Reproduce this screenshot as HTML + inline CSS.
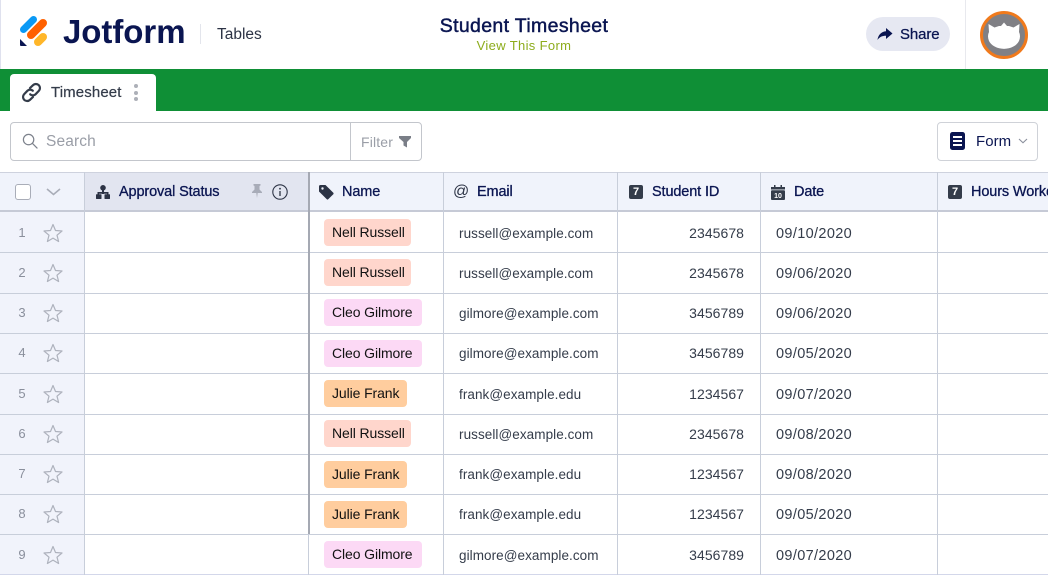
<!DOCTYPE html>
<html><head><meta charset="utf-8"><style>
html,body{margin:0;padding:0;background:#fff}
body{width:1048px;height:575px;overflow:hidden;position:relative;font-family:"Liberation Sans",sans-serif;color:#0a1551}
.a{position:absolute;white-space:nowrap}
.l{position:absolute;background:#c8ceda}
.hd{position:absolute;top:174px;height:37px;line-height:37px;font-size:14.5px;font-weight:400;-webkit-text-stroke:.3px #0a1551;letter-spacing:-.13px;white-space:nowrap}
.t{position:absolute;font-size:13.5px;color:#343c4a;white-space:nowrap;line-height:20px}
.e{margin-top:1px;letter-spacing:.07px}
.i{font-size:14px;letter-spacing:.05px}
.d{font-size:14.5px;letter-spacing:.35px;margin-top:1px}
.b{position:absolute;left:324px;height:27px;line-height:27px;border-radius:4px;font-size:14px;color:#111;padding-left:8px;box-sizing:border-box;white-space:nowrap;letter-spacing:-.1px}
.n{background:#ffd6cc;width:87px}.c{background:#fcd9f5;width:98px}.j{background:#ffcd9e;width:83px}
.num{position:absolute;left:0;width:44px;text-align:center;font-size:13px;color:#8a8f9c;line-height:20px}
.s{position:absolute;left:43px;width:20px;height:20px}
</style></head><body>

<div class="a" style="left:0;top:0;width:1048px;height:69px;background:#fff"></div>
<div class="a" style="left:0;top:0;width:1px;height:69px;background:#dfe1ee"></div>
<svg class="a" style="left:18px;top:15px" width="32" height="33" viewBox="0 0 32 33" fill="none" stroke-linecap="round">
<path d="M5.500 14.500 L15.500 4.500" stroke="#0a99f5" stroke-width="7"/>
<path d="M13 20 L25 8" stroke="#ff6100" stroke-width="8"/>
<path d="M20 27 L25 22" stroke="#ffb629" stroke-width="8"/>
<path d="M2 24 L9 31 H3 Q2 31 2 30Z" fill="#0a1551"/>
</svg>
<div class="a" style="left:63px;top:11px;font-size:33px;line-height:42px;font-weight:700;letter-spacing:-.05px;color:#0a1551">Jotform</div>
<div class="a" style="left:200px;top:24px;width:1px;height:20px;background:#e3e5ec"></div>
<div class="a" style="left:217px;top:25px;font-size:15.5px;line-height:20px;color:#2c3345">Tables</div>
<div class="a" style="left:0;width:1048px;top:14px;text-align:center;font-size:19.500px;line-height:24px;color:#0a1551;-webkit-text-stroke:.45px #0a1551;letter-spacing:.35px">Student Timesheet</div>
<div class="a" style="left:0;width:1048px;top:37px;text-align:center;font-size:13px;line-height:17px;color:#8dac1c;letter-spacing:.35px">View This Form</div>
<div class="a" style="left:866px;top:17px;width:84px;height:34px;border-radius:17px;background:#e6e8f2"></div>
<svg class="a" style="left:877px;top:28px" width="16" height="13" viewBox="0 0 16 13"><path d="M9 0 L15.500 5.500 L9 11 V7.800 C5.500 7.800 2.500 8.800 .5 12 C1 7.500 4 3.600 9 3.300Z" fill="#0a1551"/></svg>
<div class="a" style="left:900px;top:25px;font-size:15px;line-height:19px;color:#0a1551;-webkit-text-stroke:.25px #0a1551;letter-spacing:-.1px">Share</div>
<div class="a" style="left:965px;top:0;width:1px;height:69px;background:#e8e9ee"></div>
<div class="a" style="left:980px;top:11px;width:48px;height:48px;box-sizing:border-box;border-radius:50%;background:#808085;border:3px solid #f07a1c"></div>
<svg class="a" style="left:986px;top:20px" width="37" height="34" viewBox="0 0 37 34"><path d="M2.500 4 L8.500 7.500 L13 6 L15 6 L18 2.500 L21 6 L23 6 L27.500 7.500 L33.500 4 L33 12 Q35 16 33 21 A16 12 0 0 1 3 21 Q1 16 3 12Z" fill="#fff"/></svg>

<div class="a" style="left:0;top:69px;width:1048px;height:42px;background:#0f8f36"></div>
<div class="a" style="left:10px;top:74px;width:146px;height:37px;background:#fff;border-radius:4px 4px 0 0"></div>
<svg class="a" style="left:21px;top:82px" width="21" height="21" viewBox="0 0 21 21" fill="none" stroke="#343c4a" stroke-width="2.200" stroke-linecap="round"><path d="M9 6 L12 3.200 A3.800 3.800 0 0 1 17.800 8.900 L14.500 12.300 A3.800 3.800 0 0 1 9.200 12.300"/><path d="M12 15 L9 17.800 A3.800 3.800 0 0 1 3.200 12.100 L6.500 8.700 A3.800 3.800 0 0 1 11.800 8.700"/></svg>
<div class="a" style="left:51px;top:84px;font-size:15px;line-height:18px;color:#343c4a;-webkit-text-stroke:.2px #343c4a;letter-spacing:.12px">Timesheet</div>
<div class="a" style="left:134px;top:84px;width:4px;height:4px;border-radius:50%;background:#adb0b8"></div>
<div class="a" style="left:134px;top:91px;width:4px;height:4px;border-radius:50%;background:#adb0b8"></div>
<div class="a" style="left:134px;top:97px;width:4px;height:4px;border-radius:50%;background:#adb0b8"></div>

<div class="a" style="left:10px;top:122px;width:412px;height:39px;box-sizing:border-box;border:1px solid #c3c6cc;border-radius:4px"></div>
<div class="a" style="left:350px;top:122px;width:1px;height:39px;background:#c3c6cc"></div>
<svg class="a" style="left:22px;top:133px" width="16" height="16" viewBox="0 0 17 17" fill="none" stroke="#7d828c" stroke-width="1.300"><circle cx="7" cy="7" r="5.500"/><path d="M11 11 L16 16" stroke-linecap="round"/></svg>
<div class="a" style="left:46px;top:132px;font-size:15.500px;line-height:20px;color:#9a9ea7;letter-spacing:.12px">Search</div>
<div class="a" style="left:361px;top:133px;font-size:14px;line-height:18px;color:#9a9ea7;letter-spacing:.15px">Filter</div>
<svg class="a" style="left:399px;top:136px" width="12" height="12" viewBox="0 0 12 12"><path d="M0 0 H12 V2 L8 6 V11.500 L4.500 9.500 V6 L0 2Z" fill="#7a7e87"/></svg>
<div class="a" style="left:937px;top:122px;width:101px;height:39px;box-sizing:border-box;border:1px solid #cfd2d8;border-radius:4px"></div>
<svg class="a" style="left:950px;top:132px" width="15" height="18" viewBox="0 0 15 18"><rect width="15" height="18" rx="2.500" fill="#0a1551"/><path d="M3 5 H12 M3 9 H12 M3 13 H12" stroke="#fff" stroke-width="2"/></svg>
<div class="a" style="left:976px;top:132px;font-size:15px;line-height:19px;color:#0a1551;letter-spacing:.05px">Form</div>
<svg class="a" style="left:1018px;top:138px" width="10" height="6" viewBox="0 0 10 6" fill="none" stroke="#8a8f9c" stroke-width="1.100"><path d="M1 1 L5 4.800 L9 1"/></svg>

<div class="a" style="left:0;top:172px;width:1048px;height:39px;background:#f0f3fb"></div>
<div class="a" style="left:85px;top:172px;width:223px;height:39px;background:#e2e5f0"></div>
<div class="a" style="left:0;top:212px;width:85px;height:363px;background:#f1f3fb"></div>
<div class="l" style="left:0;top:172px;width:1048px;height:1px;background:#ced2de"></div>
<div class="l" style="left:0;top:210px;width:1048px;height:2px;background:#c6cad6"></div>
<div class="l" style="left:0;top:252px;width:1048px;height:1px"></div>
<div class="l" style="left:0;top:292.500px;width:1048px;height:1px"></div>
<div class="l" style="left:0;top:333px;width:1048px;height:1px"></div>
<div class="l" style="left:0;top:373px;width:1048px;height:1px"></div>
<div class="l" style="left:0;top:413.500px;width:1048px;height:1px"></div>
<div class="l" style="left:0;top:454px;width:1048px;height:1px"></div>
<div class="l" style="left:0;top:494px;width:1048px;height:1px"></div>
<div class="l" style="left:0;top:534px;width:1048px;height:1px"></div>
<div class="l" style="left:0;top:574px;width:1048px;height:1px;background:#d3d7ea"></div>
<div class="l" style="left:84px;top:172px;width:1px;height:403px"></div>
<div class="l" style="left:308px;top:172px;width:2px;height:362px;background:#a5a9b3"></div>
<div class="l" style="left:307.500px;top:534px;width:1px;height:41px"></div>
<div class="l" style="left:443px;top:172px;width:1px;height:403px"></div>
<div class="l" style="left:617px;top:172px;width:1px;height:403px"></div>
<div class="l" style="left:760px;top:172px;width:1px;height:403px"></div>
<div class="l" style="left:937px;top:172px;width:1px;height:403px"></div>

<div class="a" style="left:15px;top:184px;width:16px;height:16px;box-sizing:border-box;border:1.500px solid #a9adb8;border-radius:3px;background:#fff"></div>
<svg class="a" style="left:46px;top:188px" width="15" height="8" viewBox="0 0 15 8" fill="none" stroke="#a9adb8" stroke-width="1.600"><path d="M1 1 L7.500 6.500 L14 1"/></svg>

<svg class="a" style="left:96px;top:185px" width="14" height="14" viewBox="0 0 14 14" fill="#2c3345"><circle cx="7" cy="2.800" r="2.800"/><rect x="6" y="4" width="2" height="5"/><path d="M1.500 7 H12.500 V10 H11 V8.700 H3 V10 H1.500Z"/><rect x="0" y="9.300" width="5.500" height="4.700" rx=".5"/><rect x="8.500" y="9.300" width="5.500" height="4.700" rx=".5"/></svg>
<div class="hd" style="left:119px">Approval Status</div>
<svg class="a" style="left:252px;top:184px" width="10" height="14" viewBox="0 0 10 14" fill="#a8acb8"><path d="M1.500 0 H8.500 V1.500 L7.500 2 V5.500 L10 8 V9 H5.700 L5 14 L4.300 9 H0 V8 L2.500 5.500 V2 L1.500 1.500Z"/></svg>
<svg class="a" style="left:272px;top:184px" width="16" height="16" viewBox="0 0 16 16" fill="none" stroke="#2c3345" stroke-width="1.100"><circle cx="8" cy="8" r="7.200"/><path d="M8 7 V12" stroke-width="1.300"/><circle cx="8" cy="4.700" r=".9" fill="#2c3345" stroke="none"/></svg>

<svg class="a" style="left:319px;top:185px" width="15" height="15" viewBox="0 0 15 15"><path d="M0 1.500 Q0 0 1.500 0 H6.500 L14.300 7.800 Q15 8.500 14.300 9.200 L9.200 14.300 Q8.500 15 7.800 14.300 L0 6.500Z" fill="#2c3345"/><circle cx="3.500" cy="3.500" r="1.200" fill="#f0f3fb"/></svg>
<div class="hd" style="left:342px">Name</div>
<div class="a" style="left:453px;top:182px;font-size:16px;line-height:20px;color:#2c3345">@</div>
<div class="hd" style="left:477px">Email</div>
<div class="a" style="left:629px;top:185px;width:14px;height:14px;border-radius:2px;background:#343c4a;color:#fff;font-size:11px;font-weight:700;line-height:14px;text-align:center">7</div>
<div class="hd" style="left:652px">Student ID</div>
<svg class="a" style="left:771px;top:185px" width="14" height="15" viewBox="0 0 14 15"><path d="M0 2 H14 V4.500 H0Z M3 0 H4.500 V2 H3Z M9.500 0 H11 V2 H9.500Z" fill="#343c4a"/><rect x="0" y="5.300" width="14" height="9.700" rx="1" fill="#343c4a"/><text x="7" y="13" font-size="7" fill="#fff" text-anchor="middle" font-family="Liberation Sans" font-weight="700">10</text></svg>
<div class="hd" style="left:794px">Date</div>
<div class="a" style="left:948px;top:185px;width:14px;height:14px;border-radius:2px;background:#343c4a;color:#fff;font-size:11px;font-weight:700;line-height:14px;text-align:center">7</div>
<div class="hd" style="left:971px">Hours Worked</div>

<div class="num" style="top:223px">1</div>
<div class="num" style="top:263px">2</div>
<div class="num" style="top:303px">3</div>
<div class="num" style="top:343px">4</div>
<div class="num" style="top:384px">5</div>
<div class="num" style="top:424px">6</div>
<div class="num" style="top:464px">7</div>
<div class="num" style="top:504px">8</div>
<div class="num" style="top:545px">9</div>

<svg width="0" height="0" style="position:absolute"><defs><path id="st" d="M10 1.500 L12.500 7.500 L19 8 L14 12.200 L15.600 18.500 L10 15.100 L4.400 18.500 L6 12.200 L1 8 L7.500 7.500Z" fill="none" stroke="#aeb2bd" stroke-width="1.200" stroke-linejoin="round"/></defs></svg>
<svg class="s" style="top:223px"><use href="#st"/></svg>
<svg class="s" style="top:263px"><use href="#st"/></svg>
<svg class="s" style="top:303px"><use href="#st"/></svg>
<svg class="s" style="top:343px"><use href="#st"/></svg>
<svg class="s" style="top:384px"><use href="#st"/></svg>
<svg class="s" style="top:424px"><use href="#st"/></svg>
<svg class="s" style="top:464px"><use href="#st"/></svg>
<svg class="s" style="top:504px"><use href="#st"/></svg>
<svg class="s" style="top:545px"><use href="#st"/></svg>

<div class="b n" style="top:219px">Nell Russell</div>
<div class="b n" style="top:259px">Nell Russell</div>
<div class="b c" style="top:299px">Cleo Gilmore</div>
<div class="b c" style="top:340px">Cleo Gilmore</div>
<div class="b j" style="top:380px">Julie Frank</div>
<div class="b n" style="top:420px">Nell Russell</div>
<div class="b j" style="top:461px">Julie Frank</div>
<div class="b j" style="top:501px">Julie Frank</div>
<div class="b c" style="top:541px">Cleo Gilmore</div>

<div class="t e" style="left:459px;top:223px">russell@example.com</div>
<div class="t e" style="left:459px;top:263px">russell@example.com</div>
<div class="t e" style="left:459px;top:303px">gilmore@example.com</div>
<div class="t e" style="left:459px;top:343px">gilmore@example.com</div>
<div class="t e" style="left:459px;top:384px">frank@example.edu</div>
<div class="t e" style="left:459px;top:424px">russell@example.com</div>
<div class="t e" style="left:459px;top:464px">frank@example.edu</div>
<div class="t e" style="left:459px;top:504px">frank@example.edu</div>
<div class="t e" style="left:459px;top:545px">gilmore@example.com</div>

<div class="t i" style="right:304px;top:223px">2345678</div>
<div class="t i" style="right:304px;top:263px">2345678</div>
<div class="t i" style="right:304px;top:303px">3456789</div>
<div class="t i" style="right:304px;top:343px">3456789</div>
<div class="t i" style="right:304px;top:384px">1234567</div>
<div class="t i" style="right:304px;top:424px">2345678</div>
<div class="t i" style="right:304px;top:464px">1234567</div>
<div class="t i" style="right:304px;top:504px">1234567</div>
<div class="t i" style="right:304px;top:545px">3456789</div>

<div class="t d" style="left:776px;top:223px">09/10/2020</div>
<div class="t d" style="left:776px;top:263px">09/06/2020</div>
<div class="t d" style="left:776px;top:303px">09/06/2020</div>
<div class="t d" style="left:776px;top:343px">09/05/2020</div>
<div class="t d" style="left:776px;top:384px">09/07/2020</div>
<div class="t d" style="left:776px;top:424px">09/08/2020</div>
<div class="t d" style="left:776px;top:464px">09/08/2020</div>
<div class="t d" style="left:776px;top:504px">09/05/2020</div>
<div class="t d" style="left:776px;top:545px">09/07/2020</div>
</body></html>
